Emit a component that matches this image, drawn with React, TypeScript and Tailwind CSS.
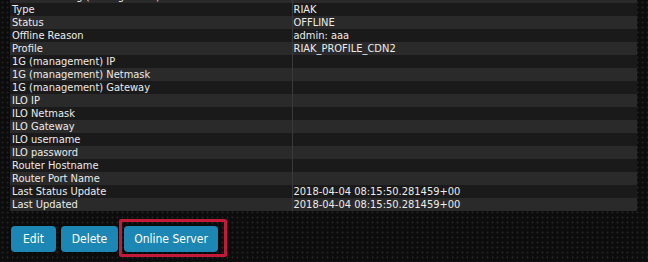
import React from 'react';

const ROWS: [string, string][] = [
  ['Traffic Routing (management)', ''],
  ['Type', 'RIAK'],
  ['Status', 'OFFLINE'],
  ['Offline Reason', 'admin: aaa'],
  ['Profile', 'RIAK_PROFILE_CDN2'],
  ['1G (management) IP', ''],
  ['1G (management) Netmask', ''],
  ['1G (management) Gateway', ''],
  ['ILO IP', ''],
  ['ILO Netmask', ''],
  ['ILO Gateway', ''],
  ['ILO username', ''],
  ['ILO password', ''],
  ['Router Hostname', ''],
  ['Router Port Name', ''],
  ['Last Status Update', '2018-04-04 08:15:50.281459+00'],
  ['Last Updated', '2018-04-04 08:15:50.281459+00'],
];

export default function App() {
  return (
    <div
      className="w-[648px] h-[262px] overflow-hidden bg-[#0c0c0c] bg-[radial-gradient(circle,#202020_0.8px,transparent_1.4px)] bg-[length:5px_5px] text-[#ececec] text-[11px] leading-[13px]"
      style={{ fontFamily: '"DejaVu Sans Condensed", "DejaVu Sans", Tahoma, sans-serif' }}
    >
      <div className="pl-[10px] -mt-[10px]">
        <table className="w-[627px] border-collapse">
          <tbody>
            {ROWS.map(([label, value], i) => (
              <tr key={label} className={i % 2 === 0 ? 'bg-[#2a2a2a]' : 'bg-[#1a1a1a]'}>
                <td className="w-[282px] h-[13px] pl-[2px] p-0 border-r border-[#3a3a3a] whitespace-nowrap">{label}</td>
                <td className="h-[13px] pl-[1px] p-0 whitespace-nowrap">{value}</td>
              </tr>
            ))}
          </tbody>
        </table>
      </div>

      <div className="flex items-start gap-[5px] pl-[11px] mt-[15px] text-[12px]">
        <button className="h-[26px] w-[45px] rounded-[4px] bg-[#1c87b4] text-white font-medium shadow-[0_1px_2px_rgba(0,0,0,0.6)]">
          Edit
        </button>
        <button className="h-[26px] w-[57px] rounded-[4px] bg-[#1c87b4] text-white font-medium shadow-[0_1px_2px_rgba(0,0,0,0.6)]">
          Delete
        </button>
        <div className="relative ml-[1px]">
          <button className="h-[26px] w-[94px] rounded-[4px] bg-[#1c87b4] text-white font-medium shadow-[0_1px_2px_rgba(0,0,0,0.6)]">
            Online Server
          </button>
          <div className="absolute -left-[5px] -top-[7px] w-[108px] h-[38px] border-[3px] border-[#c41a3a] rounded-[2px] pointer-events-none" />
        </div>
      </div>
    </div>
  );
}
